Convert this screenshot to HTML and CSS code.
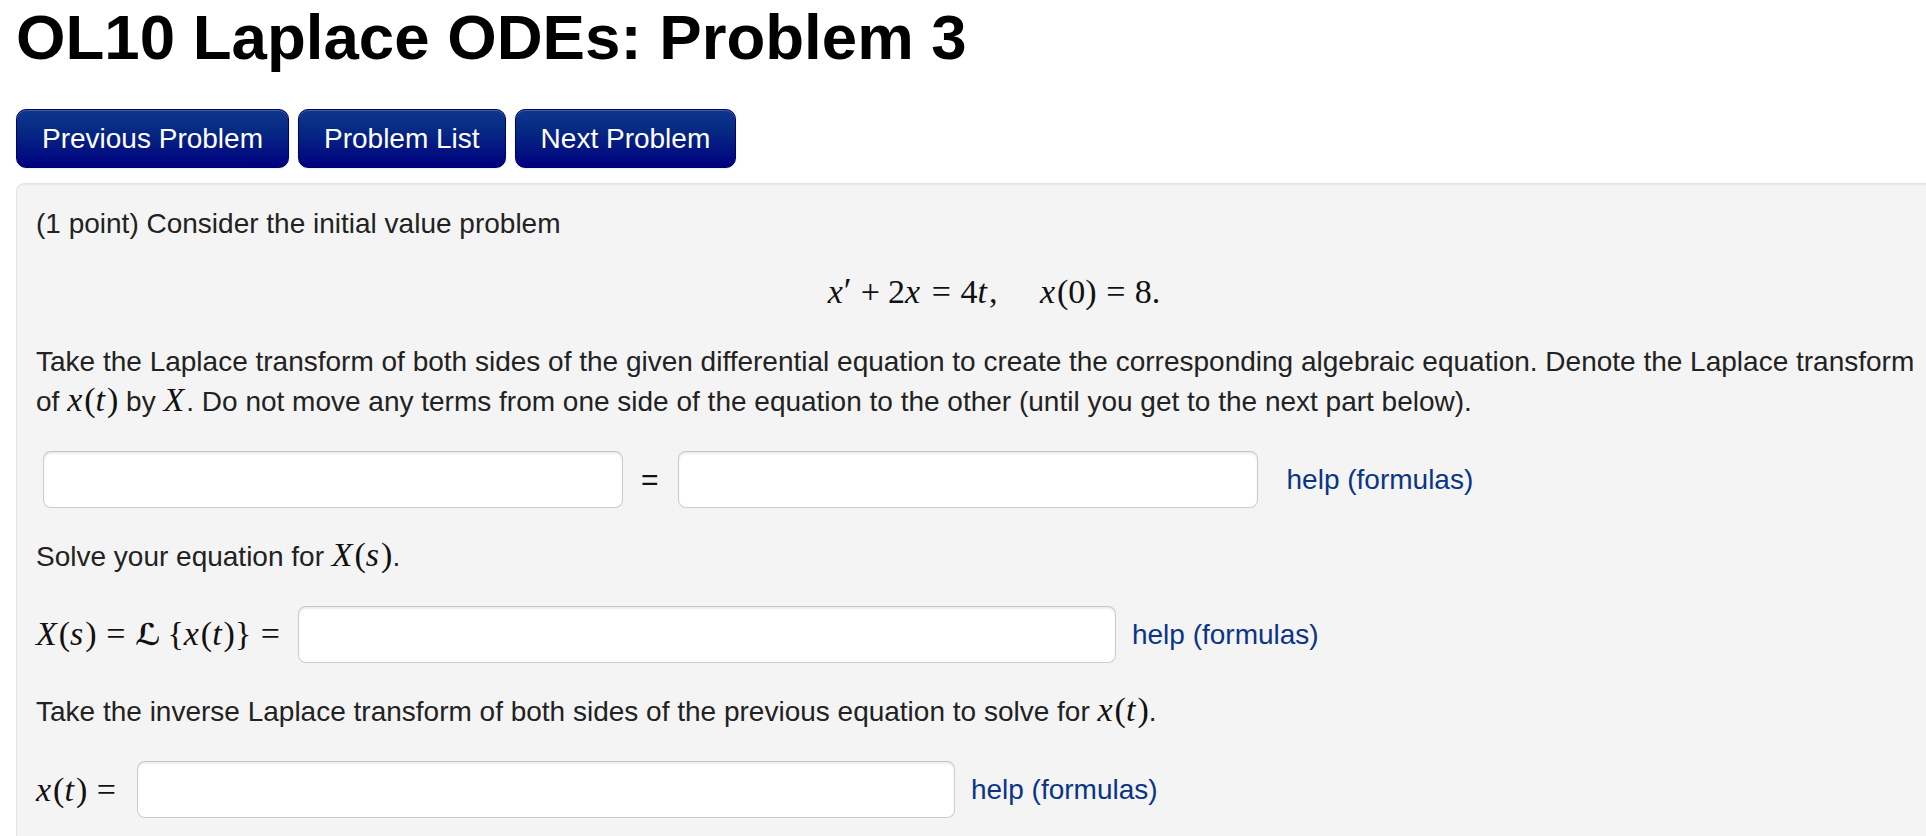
FILE: index.html
```html
<!DOCTYPE html>
<html lang="en">
<head>
<meta charset="utf-8">
<title>OL10 Laplace ODEs: Problem 3</title>
<link rel="stylesheet" href="styles.css">
</head>
<body>
<div class="page">
  <h1 class="title">OL10 Laplace ODEs: Problem 3</h1>
  <nav class="problem-nav">
    <a class="btn" href="#">Previous Problem</a>
    <a class="btn" href="#">Problem List</a>
    <a class="btn" href="#">Next Problem</a>
  </nav>
  <div class="problem">
    <div class="problem-body">
      <p class="text">(1 point) Consider the initial value problem</p>
      <div class="display-eq">
        <span class="m"><i>x</i><span class="prime">′</span><span class="op-bin">+</span>2<i>x</i><span class="op-rel">=</span>4<i>t</i>,<span class="qquad"></span><i>x</i>(0)<span class="op-rel">=</span>8.</span>
      </div>
      <p class="text text-long">Take the Laplace transform of both sides of the given differential equation to create the corresponding algebraic equation. Denote the Laplace transform of <span class="m"><i>x</i>(<i>t</i>)</span> by <span class="m"><i>X</i></span>. Do not move any terms from one side of the equation to the other (until you get to the next part below).</p>
      <div class="answer-row">
        <input class="answer answer-half first" type="text">
        <span class="eq-sign">=</span>
        <input class="answer answer-half" type="text">
        <a class="help help-wide" href="#">help (formulas)</a>
      </div>
      <p class="text">Solve your equation for <span class="m"><i>X</i>(<i>s</i>)</span>.</p>
      <div class="answer-row">
        <span class="m label"><i>X</i>(<i>s</i>)<span class="op-rel">=</span><span class="cal">ℒ</span><span class="thin"></span>{<i>x</i>(<i>t</i>)}<span class="op-rel">=</span></span>
        <input class="answer answer-long" type="text">
        <a class="help" href="#">help (formulas)</a>
      </div>
      <p class="text">Take the inverse Laplace transform of both sides of the previous equation to solve for <span class="m"><i>x</i>(<i>t</i>)</span>.</p>
      <div class="answer-row">
        <span class="m label label-short"><i>x</i>(<i>t</i>)<span class="op-rel">=</span></span>
        <input class="answer answer-long" type="text">
        <a class="help" href="#">help (formulas)</a>
      </div>
    </div>
  </div>
</div>
</body>
</html>
```

FILE: styles.css
```css
html, body {
  margin: 0;
  padding: 0;
  background: #ffffff;
  overflow: hidden;
}

body {
  font-family: "Liberation Sans", Arial, Helvetica, sans-serif;
  font-size: 28px;
  line-height: 40px;
  color: #222222;
}

.page {
  padding: 2px 0 0 16px;
}

.title {
  margin: 0 0 38px 0;
  font-size: 63.6px;
  line-height: 69px;
  font-weight: bold;
  color: #000000;
}

.problem-nav {
  display: flex;
  gap: 9px;
  margin-bottom: 15px;
}

.btn {
  display: block;
  padding: 9px 25px 8px;
  border: 1px solid #00006a;
  border-radius: 10px;
  background: linear-gradient(to bottom, #0f368c 0%, #062a84 35%, #00007f 100%);
  box-shadow: inset 0 1px 0 rgba(255, 255, 255, 0.2), 0 1px 2px rgba(0, 0, 0, 0.08);
  color: #ffffff;
  text-decoration: none;
  font-size: 28px;
  line-height: 40px;
  white-space: nowrap;
}

.problem {
  width: 1916px;
  padding: 20px 19px 40px;
  background: #f4f4f4;
  border: 1px solid #e4e4e4;
  border-radius: 8px;
  box-shadow: inset 0 1px 1px rgba(0, 0, 0, 0.05);
}

.problem-body {
  display: flex;
  flex-direction: column;
  gap: 29px;
}

.text {
  margin: 0;
}

.text .m {
  line-height: 36px;
}

.text-long {
  max-width: 1890px;
}

.display-eq {
  text-align: center;
  height: 40px;
  line-height: 36px;
}

.m {
  font-family: "Liberation Serif", "Times New Roman", serif;
  font-size: 34px;
  color: #111111;
  white-space: nowrap;
}

.m i {
  font-style: italic;
  padding-right: 2px;
}

.prime {
  font-size: 36px;
  margin-left: -1px;
  margin-right: 1px;
}

.op-bin {
  margin: 0 0.24em;
}

.op-rel {
  margin: 0 0.28em;
}

.qquad {
  display: inline-block;
  width: 1.25em;
}

.thin {
  display: inline-block;
  width: 0.2em;
}

.cal {
  font-family: "DejaVu Serif", "DejaVu Sans", serif;
  font-style: italic;
  font-weight: bold;
  font-size: 30px;
}

.answer-row {
  display: flex;
  align-items: center;
  height: 57px;
}

.answer {
  box-sizing: border-box;
  height: 57px;
  margin: 0;
  padding: 6px 10px;
  background: #ffffff;
  border: 1px solid #cccccc;
  border-top-color: #c4c4c4;
  border-radius: 8px;
  box-shadow: inset 0 2px 2px rgba(0, 0, 0, 0.075);
  font-family: "Liberation Sans", Arial, sans-serif;
  font-size: 28px;
}

.answer-half {
  width: 580px;
}

.answer-half.first {
  margin-left: 7px;
}

.answer-long {
  width: 818px;
}

.eq-sign {
  padding: 0 19px 0 18px;
  font-size: 30px;
  color: #111111;
}

.label {
  margin-right: 18px;
}

.label-short {
  margin-right: 21px;
}

.label .op-rel:last-child {
  margin-right: 0;
}

.help {
  margin-left: 16px;
  color: #0a3585;
  text-decoration: none;
  white-space: nowrap;
}

.help-wide {
  margin-left: 29px;
}
```
